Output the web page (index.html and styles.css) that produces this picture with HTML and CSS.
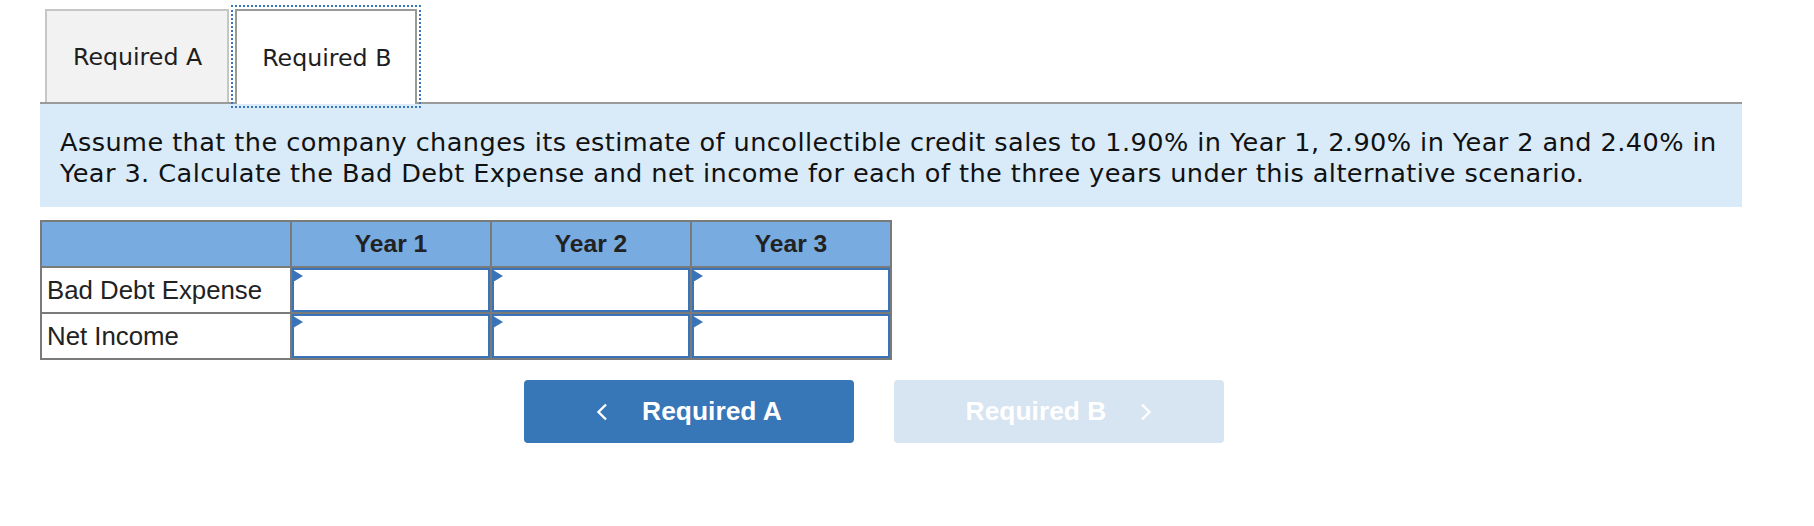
FILE: index.html
```html
<!DOCTYPE html>
<html lang="en">
<head>
<meta charset="utf-8">
<title>Required B</title>
<link rel="stylesheet" href="styles.css">
</head>
<body>
<div class="page">
  <div class="tabs">
    <div class="tab tab-a">Required A</div>
    <div class="tab tab-b">Required B</div>
  </div>
  <div class="prompt">Assume that the company changes its estimate of uncollectible credit sales to 1.90% in Year 1, 2.90% in Year 2 and 2.40% in Year 3. Calculate the Bad Debt Expense and net income for each of the three years under this alternative scenario.</div>
  <div class="grid">
    <div class="hd"></div>
    <div class="hd">Year 1</div>
    <div class="hd">Year 2</div>
    <div class="hd">Year 3</div>

    <div class="label">Bad Debt Expense</div>
    <div class="cell"><input class="field" type="text"><span class="flag"></span></div>
    <div class="cell"><input class="field" type="text"><span class="flag"></span></div>
    <div class="cell"><input class="field" type="text"><span class="flag"></span></div>

    <div class="label">Net Income</div>
    <div class="cell"><input class="field" type="text"><span class="flag"></span></div>
    <div class="cell"><input class="field" type="text"><span class="flag"></span></div>
    <div class="cell"><input class="field" type="text"><span class="flag"></span></div>
  </div>
  <div class="nav">
    <button class="btn btn-prev" type="button">
      <svg class="chev" width="12" height="18" viewBox="0 0 12 18"><polyline points="10,1.5 2.5,9 10,16.5" fill="none" stroke="#fff" stroke-width="2.4"/></svg>
      <span>Required A</span>
    </button>
    <button class="btn btn-next" type="button">
      <span>Required B</span>
      <svg class="chev" width="12" height="18" viewBox="0 0 12 18"><polyline points="2,1.5 9.5,9 2,16.5" fill="none" stroke="#fff" stroke-width="2.4"/></svg>
    </button>
  </div>
</div>
</body>
</html>
```

FILE: styles.css
```css
html, body {
  margin: 0;
  padding: 0;
  background: #ffffff;
}

.page {
  padding: 9px 72px 0 40px;
}

.tabs {
  display: flex;
  align-items: flex-end;
  padding-left: 5px;
  border-bottom: 2px solid #9a9a9a;
  font-family: "DejaVu Sans", Verdana, sans-serif;
  font-size: 23.7px;
  color: #1e1e1e;
}

.tab {
  display: flex;
  align-items: center;
  box-sizing: border-box;
  height: 93px;
  white-space: nowrap;
}

.tab-a {
  background: #f2f2f2;
  border: 2px solid #c6c6c6;
  border-bottom: none;
  padding: 0 25px 0 26px;
}

.tab-b {
  background: #ffffff;
  border: 2px solid #999999;
  border-bottom: none;
  height: 95px;
  margin-bottom: -2px;
  margin-left: 6px;
  padding: 0 24px 0 25px;
  outline: 2px dotted #3776b7;
  outline-offset: 2px;
}

.prompt {
  background: #d9ebf9;
  padding: 23px 10px 18px 20px;
  font-family: "DejaVu Sans", Verdana, sans-serif;
  font-size: 25.6px;
  letter-spacing: 0.42px;
  line-height: 31px;
  color: #111111;
}

.grid {
  display: grid;
  grid-template-columns: 248px 198px 198px 198px;
  grid-auto-rows: 44px;
  gap: 2px;
  padding: 2px;
  width: max-content;
  background: #7a7a7a;
  margin-top: 13px;
  font-family: "Liberation Sans", Arial, sans-serif;
  color: #222222;
}

.hd {
  background: #78abe0;
  display: flex;
  align-items: center;
  justify-content: center;
  font-weight: bold;
  font-size: 24.6px;
}

.label {
  background: #ffffff;
  display: flex;
  align-items: center;
  padding-left: 5px;
  font-size: 25.8px;
}

.cell {
  position: relative;
  background: #ffffff;
}

.field {
  display: block;
  box-sizing: border-box;
  width: 100%;
  height: 100%;
  margin: 0;
  border: 2px solid #3a74b8;
  background: #ffffff;
  font-family: "Liberation Sans", Arial, sans-serif;
  font-size: 22px;
  padding: 0 8px;
  outline: none;
}

.flag {
  position: absolute;
  left: 1px;
  top: 2px;
  width: 0;
  height: 0;
  border-left: 10px solid #3a74b8;
  border-top: 6px solid transparent;
  border-bottom: 6px solid transparent;
}

.nav {
  display: flex;
  gap: 40px;
  margin-top: 20px;
  padding-left: 484px;
}

.btn {
  display: flex;
  align-items: center;
  justify-content: center;
  gap: 34px;
  width: 330px;
  height: 63px;
  border: none;
  border-radius: 4px;
  padding: 0;
  font-family: "Liberation Sans", Arial, sans-serif;
  font-weight: bold;
  font-size: 26.4px;
  color: #ffffff;
}

.btn-prev {
  background: #3776b7;
}

.btn-next {
  background: #d7e4f1;
}

.chev {
  display: block;
}
```
